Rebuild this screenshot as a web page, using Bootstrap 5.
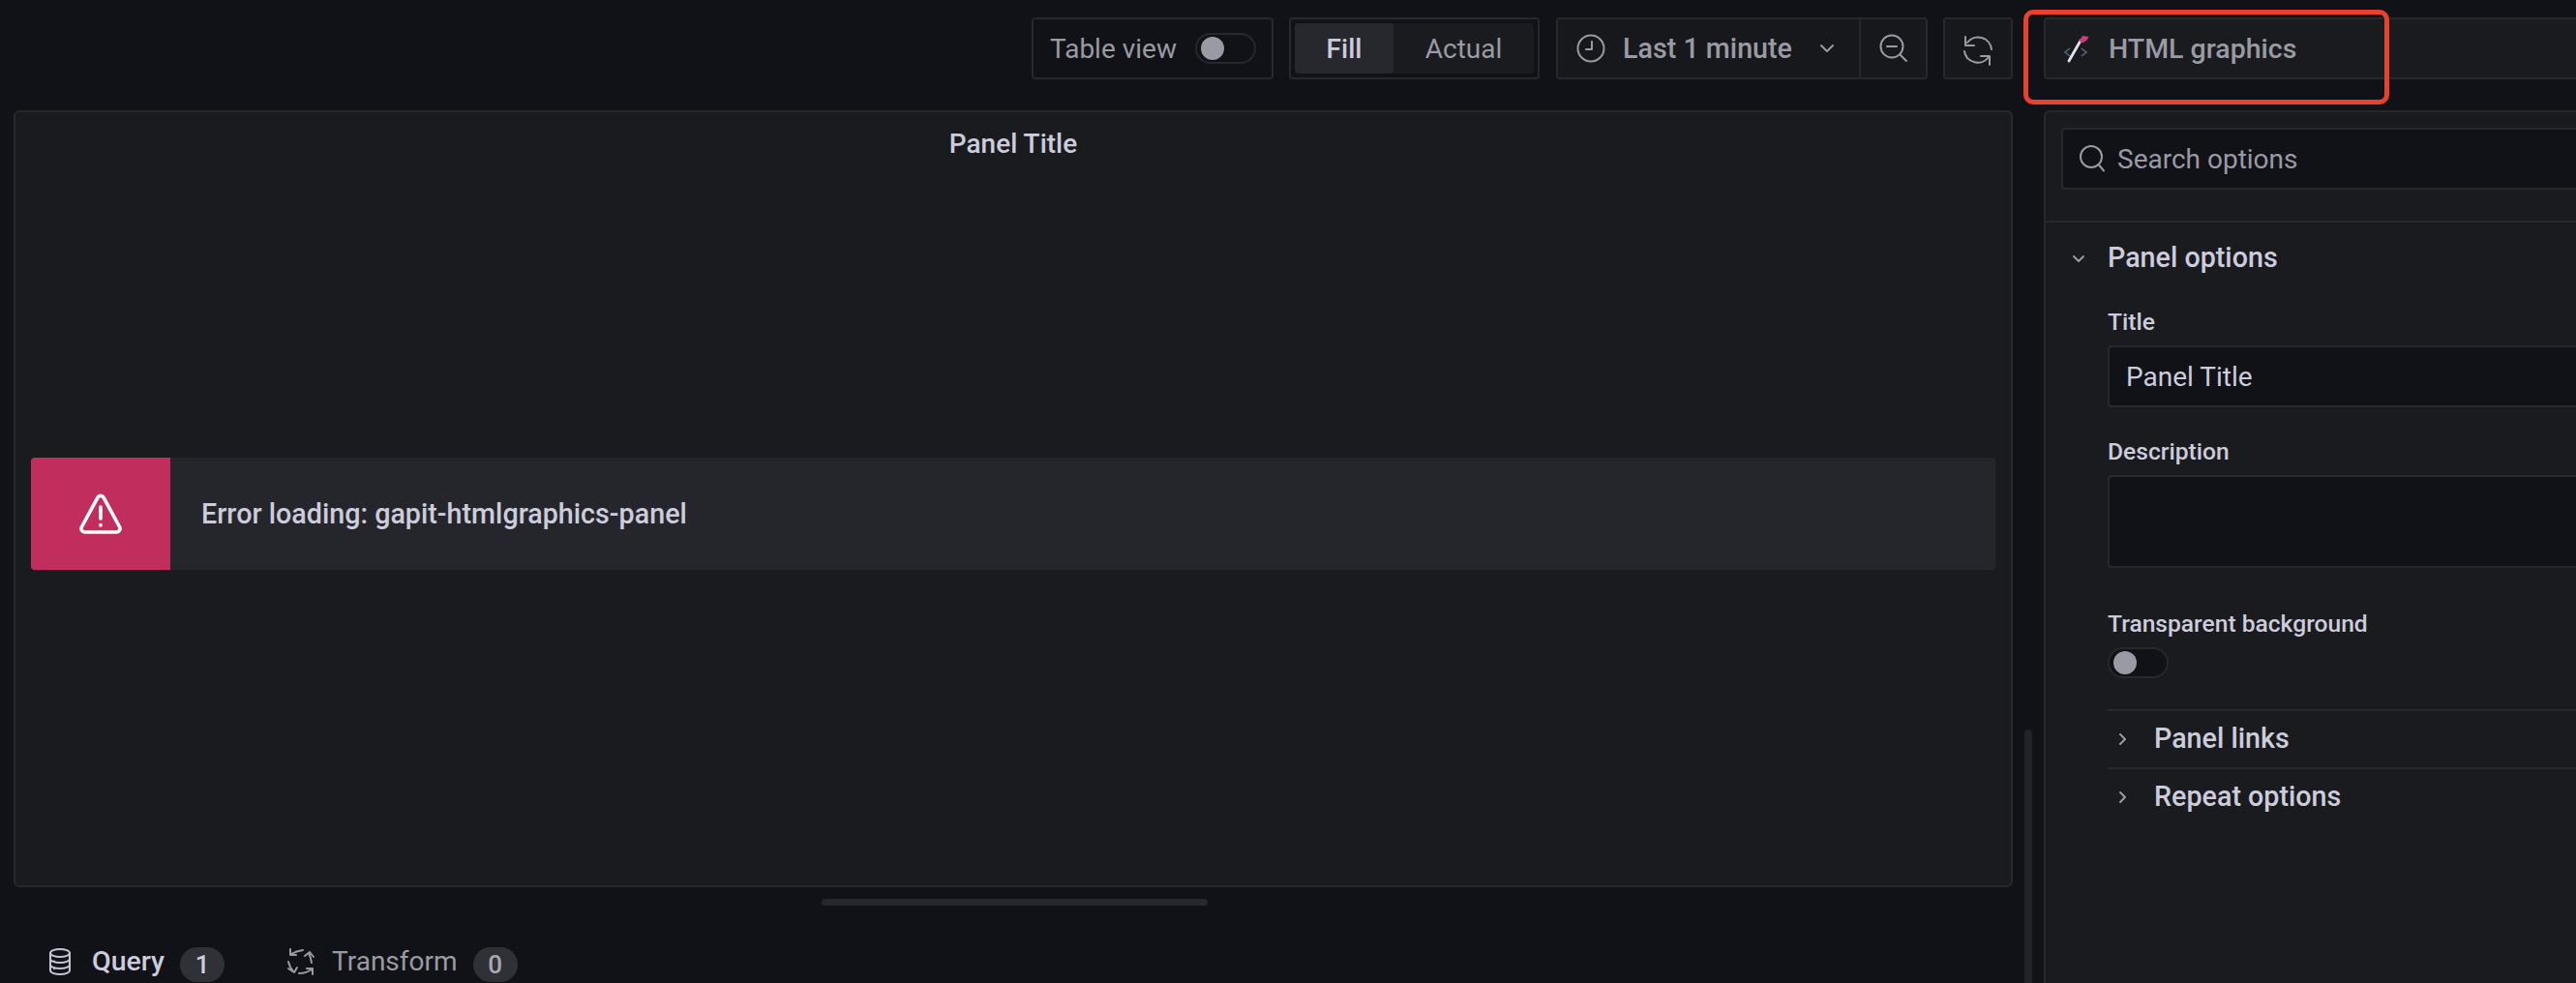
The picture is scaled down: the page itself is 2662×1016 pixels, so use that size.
<!DOCTYPE html>
<html lang="en">
<head>
  <meta charset="UTF-8">
  <meta name="viewport" content="width=device-width, initial-scale=1.0">
  <title>Edit panel</title>
  <link href="https://cdn.jsdelivr.net/npm/bootstrap@5.3.0/dist/css/bootstrap.min.css" rel="stylesheet">
  <style>
    body { background: #111217; color: #ccccdc; font-family: Roboto, "Liberation Sans", sans-serif; font-size: 28px; }
    svg { display: block; flex: none; }
    .ico { fill: none; stroke: #9a9aa4; stroke-width: 2; stroke-linecap: round; stroke-linejoin: round; }
    .ico-light { stroke: #c4c4d2; }
    .dim { color: #9a9aa4; }
    .fw-m { font-weight: 500; }
    .txt-w { font-size: 28.7px; font-weight: 500; }

    .tbar { height: 114px; padding-top: 18px; gap: 16px; }
    .tbox { height: 64px; border: 2px solid #26282d; border-radius: 4px; }
    .tbox span { padding-top: 2px; }
    .tbox-table { width: 250px; padding: 0 16px 0 17px; }
    .tbox-fit { width: 259px; padding: 4px; margin-right: 1px; }
    .tbox-time { width: 384px; background: #16181c; }
    .tbox-refresh { width: 72px; background: #16181c; }
    .tbox-viz { width: 550px; margin-left: 16px; padding-left: 10px; gap: 13px; background: #1a1b1f; border-right: 0; border-radius: 4px 0 0 4px; }
    .tbox-viz span { font-size: 28.5px; }
    .time-main { width: 311px; padding-left: 19px; gap: 18px; }
    .time-chev { margin-left: auto; margin-right: 25px; }
    .time-zoom { flex: 1; border-left: 2px solid #26282d; height: 100%; }

    .tog { width: 63px; height: 32px; border: 2px solid #26282d; border-radius: 16px; background: #111217; padding: 2px 4px; }
    .tog-knob { width: 24px; height: 24px; border-radius: 50%; background: #9a9aa4; }

    .fit-group { width: 100%; height: 100%; background: #1a1b1f; border-radius: 4px; }
    .fit-btn { font-size: 28px; color: #9a9aa4; border: 0; border-radius: 4px; padding: 2px 0 0; height: 100%; width: 145px; }
    .fit-btn.fit-on { width: 102px; background: #26282d; color: #ccccdc; font-weight: 500; }

    .main-wrap { flex: 1; min-height: 0; gap: 32px; padding-left: 14px; }
    .left-col { width: 2066px; flex: none; }
    .viz-panel { height: 803px; background: #1a1b1f; border: 2px solid #26282d; border-radius: 6px; padding: 0 16px; }
    .viz-head { height: 64px; padding-top: 2px; font-size: 28px; }
    .err-box { height: 116px; margin-top: 293px; background: #25262b; border-radius: 4px; overflow: hidden; }
    .err-icon { width: 144px; background: #c12e5e; }
    .err-text { padding: 2px 0 0 32px; font-size: 28.7px; }
    .drag-bar { width: 399px; height: 7px; margin: 12px 0 0 835px; background: #26282d; border-radius: 4px; }

    .tabs-row { padding: 38px 0 0 28px; height: 78px; }
    .tab-count { width: 46px; height: 36px; padding: 0; margin: 6px 0 0 16px; font-size: 26px; line-height: 36px; font-weight: 500; background: #303137; color: #ccccdc; }
    .tab-query { font-size: 28.5px; font-weight: 500; }
    .tab-query svg { margin-right: 13px; }
    .tab-transform { color: #9a9aa4; margin-left: 57px; }
    .tab-transform svg { margin-right: 8px; }
    .tab-transform .tab-count { color: #a8a8b2; }

    .fake-scroll { position: absolute; left: 2092px; top: 640px; width: 8px; bottom: 0; background: #212328; border-radius: 4px 4px 0 0; }

    .opts-pane { flex: 1; background: #1a1b1f; border: 2px solid #26282d; border-right: 0; border-bottom: 0; border-radius: 6px 0 0 0; }
    .search-wrap { height: 114px; padding: 16px 0 0 16px; border-bottom: 2px solid #26282d; }
    .search-box { height: 64px; background: #111217; border: 2px solid #26282d; border-right: 0; border-radius: 4px 0 0 4px; padding-left: 16px; gap: 12px; }
    .search-box span { padding-top: 2px; }
    .opts-head { height: 74px; padding-left: 27px; gap: 23px; }
    .opts-body { padding-left: 64px; }
    .opt-label { font-size: 24.6px; font-weight: 500; line-height: 28px; margin: 0 0 10px; color: #ccccdc; }
    .lbl-title { margin-top: 15px; }
    .lbl-desc { margin-top: 32px; }
    .lbl-transp { margin-top: 44px; }
    .opt-input.form-control, .opt-input.form-control:focus { height: 64px; background: #111217; color: #ccccdc; font-size: 28px; border: 2px solid #26282d; border-right: 0; border-radius: 4px 0 0 4px; padding: 0 17px; box-shadow: none; }
    textarea.opt-input.form-control { height: 96px; resize: none; }
    .opt-sub { height: 60px; border-top: 2px solid #26282d; padding-left: 11px; gap: 28px; }
    .opt-sub-first { margin-top: 32px; }

    .red-mark { position: absolute; left: 2091px; top: 10px; width: 378px; height: 98px; border: 5px solid #e8432a; border-radius: 10px; pointer-events: none; }
  </style>
</head>
<body class="d-flex flex-column vh-100 overflow-hidden position-relative">

<div class="tbar d-flex justify-content-end">
  <div class="tbox tbox-table d-flex align-items-center justify-content-between dim">
    <span>Table view</span>
    <div class="tog"><div class="tog-knob"></div></div>
  </div>
  <div class="tbox tbox-fit">
    <div class="fit-group d-flex">
      <button class="btn fit-btn fit-on" type="button">Fill</button>
      <button class="btn fit-btn" type="button">Actual</button>
    </div>
  </div>
  <div class="tbox tbox-time d-flex align-items-center">
    <div class="time-main d-flex align-items-center dim">
      <!-- clock -->
      <svg class="ico" width="30" height="30" viewBox="0 0 30 30" stroke-width="2.6"><circle cx="15" cy="15" r="13.500"/><path d="M16 8v8h-6"/></svg>
      <span class="txt-w">Last 1 minute</span>
      <svg class="ico time-chev" width="16" height="10" viewBox="0 0 16 10" stroke-width="2.6"><path d="M2 2l6 6 6-6"/></svg>
    </div>
    <div class="time-zoom d-flex align-items-center justify-content-center">
      <svg class="ico" width="32" height="32" viewBox="0 0 32 32" stroke-width="2.6"><circle cx="14" cy="14" r="11.500"/><path d="M22.500 22.500L29 29M9 14h10"/></svg>
    </div>
  </div>
  <div class="tbox tbox-refresh d-flex align-items-center justify-content-center">
    <svg class="ico" width="48" height="48" viewBox="0 0 48 48" stroke-width="3"><path d="M11 12v9h9M36 41v-9h-9"/><path d="M13 18A14 14 0 0 1 38 25M35 33A14 14 0 0 1 10 27"/></svg>
  </div>
  <div class="tbox tbox-viz d-flex align-items-center">
    <!-- plugin logo: pen over code brackets -->
    <svg width="42" height="42" viewBox="0 0 42 42">
      <path d="M15 21l-5 4 5 4M27 21l5 4-5 4" fill="none" stroke="#526a80" stroke-width="1.600"/>
      <path d="M14 34L26 13" stroke="#dfe4ee" stroke-width="2.800" stroke-linecap="round"/>
      <path d="M24.500 13.500L28 8l6.500 1-2 3.500-4.500 3z" fill="#c63c86"/>
    </svg>
    <span class="fw-m dim">HTML graphics</span>
  </div>
</div>

<div class="main-wrap d-flex position-relative">
  <div class="left-col">
    <div class="viz-panel d-flex flex-column">
      <div class="viz-head d-flex align-items-center justify-content-center fw-m">Panel Title</div>
      <div class="err-box d-flex">
        <div class="err-icon d-flex align-items-center justify-content-center">
          <svg width="46" height="42" viewBox="0 0 46 42" fill="none" stroke="#fff" stroke-width="3.600" stroke-linecap="round" stroke-linejoin="round">
            <path d="M20 4.200L3.200 35a3.600 3.600 0 0 0 3.200 5h33.200a3.600 3.600 0 0 0 3.200-5L26 4.200a3.400 3.400 0 0 0-6 0z"/>
            <path d="M23 14v12M23 32.500v.4"/>
          </svg>
        </div>
        <div class="err-text d-flex align-items-center fw-m">Error loading: gapit-htmlgraphics-panel</div>
      </div>
    </div>
    <div class="drag-bar"></div>
    <div class="tabs-row d-flex align-items-center">
      <div class="tab-query d-flex align-items-center">
        <svg class="ico ico-light" width="40" height="44" viewBox="0 0 40 44" stroke-width="2.400"><ellipse cx="20" cy="13" rx="10" ry="4"/><path d="M10 13v18c0 2.200 4.500 4 10 4s10-1.800 10-4V13M10 19c0 2.200 4.500 4 10 4s10-1.800 10-4M10 25c0 2.200 4.500 4 10 4s10-1.800 10-4M14 21.500v.2M14 29v.2"/></svg>
        <span>Query</span>
        <span class="badge rounded-pill tab-count">1</span>
      </div>
      <div class="tab-transform d-flex align-items-center">
        <svg class="ico" width="46" height="46" viewBox="0 0 46 46" stroke-width="3"><path d="M24 11Q17 12 12 15M11 10v6h6M33 24Q32 18 30 14M26 17l5-4 4 5M20 35Q27 35 33 31M34 36v-6h-6M9 23Q10 28 14 33M9 30l6 4 3-5"/></svg>
        <span>Transform</span>
        <span class="badge rounded-pill tab-count">0</span>
      </div>
    </div>
  </div>

  <div class="fake-scroll"></div>

  <div class="opts-pane">
    <div class="search-wrap">
      <div class="search-box d-flex align-items-center dim">
        <svg class="ico" width="28" height="30" viewBox="0 0 28 30" stroke-width="2.600"><circle cx="13" cy="13" r="11"/><path d="M21 21.500L26 27.500"/></svg>
        <span>Search options</span>
      </div>
    </div>
    <div class="opts-head d-flex align-items-center txt-w">
      <svg class="ico" width="14" height="9" viewBox="0 0 14 9" stroke-width="2.600"><path d="M2 2l5 5 5-5"/></svg>
      <span>Panel options</span>
    </div>
    <div class="opts-body">
      <p class="opt-label lbl-title">Title</p>
      <input class="form-control opt-input" type="text" value="Panel Title">
      <p class="opt-label lbl-desc">Description</p>
      <textarea class="form-control opt-input"></textarea>
      <p class="opt-label lbl-transp">Transparent background</p>
      <div class="tog"><div class="tog-knob"></div></div>
      <div class="opt-sub opt-sub-first d-flex align-items-center txt-w">
        <svg class="ico" width="9" height="14" viewBox="0 0 9 14" stroke-width="2.600"><path d="M2 2l5 5-5 5"/></svg>
        <span>Panel links</span>
      </div>
      <div class="opt-sub d-flex align-items-center txt-w">
        <svg class="ico" width="9" height="14" viewBox="0 0 9 14" stroke-width="2.600"><path d="M2 2l5 5-5 5"/></svg>
        <span>Repeat options</span>
      </div>
    </div>
  </div>
</div>

<div class="red-mark"></div>

<script src="https://cdn.jsdelivr.net/npm/bootstrap@5.3.0/dist/js/bootstrap.bundle.min.js"></script>
</body>
</html>
